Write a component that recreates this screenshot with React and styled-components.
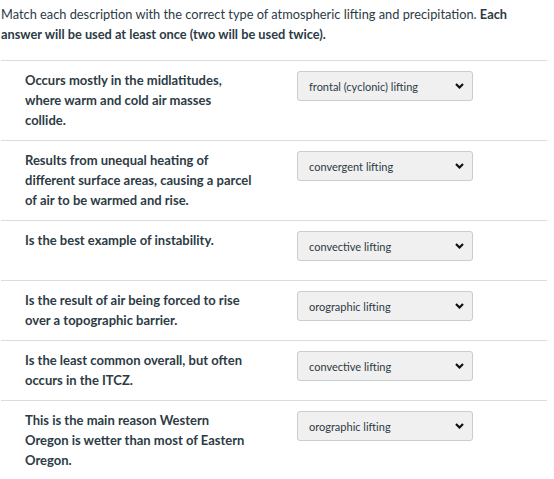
import React from 'react';
import styled, { createGlobalStyle } from 'styled-components';

const GlobalStyle = createGlobalStyle`
    body {
        margin: 0;
        background: #ffffff;
        font-family: Lato, "Open Sans", sans-serif;
        color: #2d3b45;
    }
`;

const questions = [
    {
        text: 'Occurs mostly in the midlatitudes, where warm and cold air masses collide.',
        answer: 'frontal (cyclonic) lifting',
    },
    {
        text: 'Results from unequal heating of different surface areas, causing a parcel of air to be warmed and rise.',
        answer: 'convergent lifting',
    },
    {
        text: 'Is the best example of instability.',
        answer: 'convective lifting',
    },
    {
        text: 'Is the result of air being forced to rise over a topographic barrier.',
        answer: 'orographic lifting',
    },
    {
        text: 'Is the least common overall, but often occurs in the ITCZ.',
        answer: 'convective lifting',
    },
    {
        text: 'This is the main reason Western Oregon is wetter than most of Eastern Oregon.',
        answer: 'orographic lifting',
    },
];

const options = [
    'frontal (cyclonic) lifting',
    'convergent lifting',
    'convective lifting',
    'orographic lifting',
];

function Chevron() {
    return (
        <svg width="9" height="6" viewBox="0 0 9 6">
            <path d="M1 1 L4.5 4.5 L8 1" fill="none" stroke="#111" strokeWidth="2.2" />
        </svg>
    );
}

function App() {
    return (
        <Page>
            <GlobalStyle />
            <Intro>
                Match each description with the correct type of atmospheric lifting and
                precipitation. <strong>Each answer will be used at least once (two will be used twice).</strong>
            </Intro>
            <List>
                {questions.map((q, i) => (
                    <Row key={i}>
                        <Question>{q.text}</Question>
                        <SelectWrap>
                            <Select defaultValue={q.answer}>
                                {options.map((o) => (
                                    <option key={o} value={o}>{o}</option>
                                ))}
                            </Select>
                            <Arrow>
                                <Chevron />
                            </Arrow>
                        </SelectWrap>
                    </Row>
                ))}
            </List>
        </Page>
    );
}

const Page = styled.div`
    width: 546px;
    padding: 4px 0 0 1px;
    color: #2d3b45;
`;

const Intro = styled.p`
    margin: 0;
    font-size: 12.8px;
    line-height: 20px;
    color: #2d3b45;

    strong {
        font-weight: 700;
    }
`;

const List = styled.div`
    margin-top: 16px;
`;

const Row = styled.div`
    display: flex;
    align-items: flex-start;
    border-top: 1px solid #dcdcdc;
    padding: 9px 0 10px 24px;
`;

const Question = styled.div`
    width: 230px;
    margin-right: 42px;
    font-size: 13px;
    font-weight: 700;
    line-height: 20px;
    color: #2d3b45;
`;

const SelectWrap = styled.div`
    position: relative;
    width: 176px;
    margin: 1px 0 9px;
`;

const Select = styled.select`
    appearance: none;
    -webkit-appearance: none;
    display: block;
    width: 100%;
    height: 30px;
    padding: 0 24px 0 11px;
    border: 1px solid #c7cdd1;
    border-radius: 3px;
    background: #f0f0f0;
    font-family: Lato, "Open Sans", sans-serif;
    font-size: 11px;
    color: #2d3b45;
    outline: none;
`;

const Arrow = styled.span`
    position: absolute;
    right: 9px;
    top: 12px;
    display: flex;
    pointer-events: none;
`;

export default App;
